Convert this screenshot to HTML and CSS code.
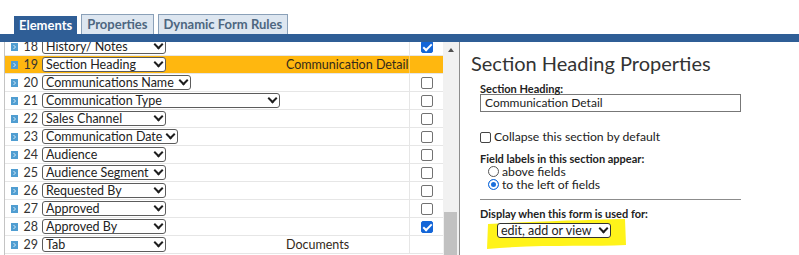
FILE: index.html
```html
<!DOCTYPE html>
<html lang="en">
<head>
    <meta charset="UTF-8">
    <title>Form Elements</title>
    <link rel="stylesheet" href="styles.css">
</head>
<body>
    <div class="tabs">
        <div class="tab active">Elements</div>
        <div class="tab">Properties</div>
        <div class="tab">Dynamic Form Rules</div>
    </div>
    <div class="bar"></div>

    <div class="main">
        <div class="list-pane">
            <div class="rows">
                <div class="rows-inner">
                    <div class="row">
                        <div class="cell-field"><svg class="grip" width="7" height="8" viewBox="0 0 7 8"><rect width="7" height="8" fill="#4f9dd1"/><path d="M2.5 2l2 2-2 2" stroke="#d6ebf7" fill="none"/></svg><span class="num">18</span><span class="sel w-sm"><span class="sel-text">History/ Notes</span></span></div>
                        <div class="cell-label"></div>
                        <div class="cell-check"><span class="cb on"></span></div>
                    </div>
                    <div class="row current">
                        <div class="cell-field"><svg class="grip" width="7" height="8" viewBox="0 0 7 8"><rect width="7" height="8" fill="#4f9dd1"/><path d="M2.5 2l2 2-2 2" stroke="#d6ebf7" fill="none"/></svg><span class="num">19</span><span class="sel w-sm"><span class="sel-text">Section Heading</span></span></div>
                        <div class="cell-label">Communication Detail</div>
                        <div class="cell-check"></div>
                    </div>
                    <div class="row">
                        <div class="cell-field"><svg class="grip" width="7" height="8" viewBox="0 0 7 8"><rect width="7" height="8" fill="#4f9dd1"/><path d="M2.5 2l2 2-2 2" stroke="#d6ebf7" fill="none"/></svg><span class="num">20</span><span class="sel w-name"><span class="sel-text">Communications Name</span></span></div>
                        <div class="cell-label"></div>
                        <div class="cell-check"><span class="cb"></span></div>
                    </div>
                    <div class="row">
                        <div class="cell-field"><svg class="grip" width="7" height="8" viewBox="0 0 7 8"><rect width="7" height="8" fill="#4f9dd1"/><path d="M2.5 2l2 2-2 2" stroke="#d6ebf7" fill="none"/></svg><span class="num">21</span><span class="sel w-type"><span class="sel-text">Communication Type</span></span></div>
                        <div class="cell-label"></div>
                        <div class="cell-check"><span class="cb"></span></div>
                    </div>
                    <div class="row">
                        <div class="cell-field"><svg class="grip" width="7" height="8" viewBox="0 0 7 8"><rect width="7" height="8" fill="#4f9dd1"/><path d="M2.5 2l2 2-2 2" stroke="#d6ebf7" fill="none"/></svg><span class="num">22</span><span class="sel w-sm"><span class="sel-text">Sales Channel</span></span></div>
                        <div class="cell-label"></div>
                        <div class="cell-check"><span class="cb"></span></div>
                    </div>
                    <div class="row">
                        <div class="cell-field"><svg class="grip" width="7" height="8" viewBox="0 0 7 8"><rect width="7" height="8" fill="#4f9dd1"/><path d="M2.5 2l2 2-2 2" stroke="#d6ebf7" fill="none"/></svg><span class="num">23</span><span class="sel w-date"><span class="sel-text">Communication Date</span></span></div>
                        <div class="cell-label"></div>
                        <div class="cell-check"><span class="cb"></span></div>
                    </div>
                    <div class="row">
                        <div class="cell-field"><svg class="grip" width="7" height="8" viewBox="0 0 7 8"><rect width="7" height="8" fill="#4f9dd1"/><path d="M2.5 2l2 2-2 2" stroke="#d6ebf7" fill="none"/></svg><span class="num">24</span><span class="sel w-sm"><span class="sel-text">Audience</span></span></div>
                        <div class="cell-label"></div>
                        <div class="cell-check"><span class="cb"></span></div>
                    </div>
                    <div class="row">
                        <div class="cell-field"><svg class="grip" width="7" height="8" viewBox="0 0 7 8"><rect width="7" height="8" fill="#4f9dd1"/><path d="M2.5 2l2 2-2 2" stroke="#d6ebf7" fill="none"/></svg><span class="num">25</span><span class="sel w-sm"><span class="sel-text">Audience Segment</span></span></div>
                        <div class="cell-label"></div>
                        <div class="cell-check"><span class="cb"></span></div>
                    </div>
                    <div class="row">
                        <div class="cell-field"><svg class="grip" width="7" height="8" viewBox="0 0 7 8"><rect width="7" height="8" fill="#4f9dd1"/><path d="M2.5 2l2 2-2 2" stroke="#d6ebf7" fill="none"/></svg><span class="num">26</span><span class="sel w-sm"><span class="sel-text">Requested By</span></span></div>
                        <div class="cell-label"></div>
                        <div class="cell-check"><span class="cb"></span></div>
                    </div>
                    <div class="row">
                        <div class="cell-field"><svg class="grip" width="7" height="8" viewBox="0 0 7 8"><rect width="7" height="8" fill="#4f9dd1"/><path d="M2.5 2l2 2-2 2" stroke="#d6ebf7" fill="none"/></svg><span class="num">27</span><span class="sel w-sm"><span class="sel-text">Approved</span></span></div>
                        <div class="cell-label"></div>
                        <div class="cell-check"><span class="cb"></span></div>
                    </div>
                    <div class="row">
                        <div class="cell-field"><svg class="grip" width="7" height="8" viewBox="0 0 7 8"><rect width="7" height="8" fill="#4f9dd1"/><path d="M2.5 2l2 2-2 2" stroke="#d6ebf7" fill="none"/></svg><span class="num">28</span><span class="sel w-sm"><span class="sel-text">Approved By</span></span></div>
                        <div class="cell-label"></div>
                        <div class="cell-check"><span class="cb on"></span></div>
                    </div>
                    <div class="row">
                        <div class="cell-field"><svg class="grip" width="7" height="8" viewBox="0 0 7 8"><rect width="7" height="8" fill="#4f9dd1"/><path d="M2.5 2l2 2-2 2" stroke="#d6ebf7" fill="none"/></svg><span class="num">29</span><span class="sel w-sm"><span class="sel-text">Tab</span></span></div>
                        <div class="cell-label">Documents</div>
                        <div class="cell-check"></div>
                    </div>
                </div>
            </div>
            <div class="scroll">
                <div class="scroll-up"><span class="arrow-up"></span></div>
                <div class="scroll-space"></div>
                <div class="scroll-thumb"></div>
            </div>
        </div>

        <div class="props">
            <h1>Section Heading Properties</h1>
            <div class="form">
                <div class="lbl">Section Heading:</div>
                <div class="text-in">Communication Detail</div>

                <div class="check-line"><span class="box"></span>Collapse this section by default</div>

                <div class="lbl lbl-gap">Field labels in this section appear:</div>
                <div class="radio-line"><span class="radio"></span>above fields</div>
                <div class="radio-line"><span class="radio on"></span>to the left of fields</div>

                <div class="rule"></div>

                <div class="lbl lbl-gap">Display when this form is used for:</div>
                <div class="marked">
                    <svg class="marker" width="150" height="34" viewBox="0 0 150 34"><path d="M8 6 C40 4 100 2 145 1 L146 27 C110 29 60 26 7 31 Z" fill="#fff31a"/></svg>
                    <span class="sel sel-mode"><span class="sel-text">edit, add or view</span></span>
                </div>
            </div>
        </div>
    </div>
</body>
</html>
```

FILE: styles.css
```css
* {
    margin: 0;
    padding: 0;
    box-sizing: border-box;
}

body {
    font-family: Lato, 'Open Sans', sans-serif;
    color: #222;
    background: #fff;
    width: 799px;
    height: 255px;
    overflow: hidden;
}

/* tabs */
.tabs {
    display: flex;
    align-items: flex-end;
    gap: 4px;
    height: 34px;
    padding: 14px 0 0 14px;
}

.tab {
    height: 20px;
    padding: 0 5px;
    font-size: 13px;
    font-weight: 700;
    line-height: 19px;
    color: #4d6680;
    background: #dde6f0;
    border: 1px solid #8aa0b8;
    border-bottom: none;
}

.tab.active {
    height: 18px;
    line-height: 17px;
    padding: 0 4px;
    background: #2f5e96;
    border-color: #2f5e96;
    color: #fff;
}

.bar {
    height: 8px;
    background: #2f5e96;
}

.main {
    display: flex;
    height: 213px;
}

/* element list */
.list-pane {
    display: flex;
    margin-left: 4px;
    border-left: 1px solid #c4c4c4;
    border-right: 1px solid #8d8d8d;
}

.rows {
    width: 438px;
    overflow: hidden;
}

.rows-inner {
    margin-top: -4px;
}

.row {
    display: grid;
    grid-template-columns: 279px 125px 34px;
    align-items: center;
    height: 18px;
    border-bottom: 1px solid #e6e6e6;
}

.row.current {
    background: #ffb70f;
}

.cell-field {
    display: flex;
    align-items: center;
}

.grip {
    margin-left: 6px;
    flex-shrink: 0;
}

.num {
    width: 20px;
    text-align: right;
    font-size: 12.5px;
    color: #333;
}

.sel {
    display: flex;
    align-items: center;
    height: 15px;
    margin-left: 4px;
    padding: 0 2px 0 3px;
    border: 1px solid #5c5c5c;
    border-radius: 3px;
    background: #fff;
    font-size: 12.5px;
}

.sel::after {
    content: "";
    flex-shrink: 0;
    width: 5px;
    height: 5px;
    margin: -5px 1px 0 3px;
    border-right: 2px solid #1e1e1e;
    border-bottom: 2px solid #1e1e1e;
    transform: rotate(45deg);
}

.sel-text {
    flex: 1;
    overflow: hidden;
    white-space: nowrap;
    line-height: 15px;
}

.w-sm { width: 124px; }
.w-name { width: 149px; }
.w-type { width: 238px; }
.w-date { width: 136px; }

.cell-label {
    padding-left: 2px;
    font-size: 12.5px;
    white-space: nowrap;
    color: #33291a;
}

.cell-check {
    display: flex;
    align-items: center;
    justify-content: center;
    height: 17px;
    border-left: 1px solid #e6e6e6;
}

.row.current .cell-check {
    border-left-color: #f9cd6c;
}

.cb {
    position: relative;
    width: 12px;
    height: 12px;
    border: 1px solid #727272;
    border-radius: 2px;
    background: #fff;
}

.cb.on {
    background: #1466d8;
    border-color: #1466d8;
}

.cb.on::after {
    content: "";
    position: absolute;
    left: 3px;
    top: 0;
    width: 3px;
    height: 7px;
    border: solid #fff;
    border-width: 0 2px 2px 0;
    transform: rotate(45deg);
}

/* scrollbar */
.scroll {
    display: flex;
    flex-direction: column;
    width: 16px;
    background: #f1f1f1;
}

.scroll-up {
    display: flex;
    align-items: center;
    justify-content: center;
    height: 15px;
}

.arrow-up {
    width: 0;
    height: 0;
    border-left: 3px solid transparent;
    border-right: 3px solid transparent;
    border-bottom: 4px solid #505050;
}

.scroll-space {
    flex: 1;
}

.scroll-thumb {
    height: 43px;
    margin: 0 2px 0 1px;
    background: #c1c1c1;
}

/* properties */
.props {
    flex: 1;
    padding: 9px 0 0 11px;
}

.props h1 {
    font-size: 20px;
    font-weight: 400;
    line-height: 24px;
    color: #333;
}

.form {
    width: 261px;
    margin: 8px 0 0 9px;
}

.lbl {
    height: 12px;
    font-size: 11px;
    font-weight: 700;
    line-height: 12px;
    color: #222;
    white-space: nowrap;
}

.lbl-gap {
    margin-top: 9px;
}

.text-in {
    height: 18px;
    margin-top: -1px;
    padding: 0 4px;
    border: 1px solid #777;
    font-size: 12px;
    line-height: 16px;
}

.check-line {
    display: flex;
    align-items: center;
    gap: 3px;
    height: 14px;
    margin-top: 18px;
    font-size: 12.2px;
    line-height: 14px;
}

.box {
    width: 11px;
    height: 11px;
    border: 1px solid #444;
    border-radius: 2px;
}

.radio-line {
    display: flex;
    align-items: center;
    gap: 3px;
    height: 13px;
    padding-left: 8px;
    font-size: 12.2px;
    line-height: 13px;
}

.radio {
    width: 11px;
    height: 11px;
    border: 1px solid #555;
    border-radius: 50%;
}

.radio.on {
    background: #1a6fdc;
    border-color: #1a6fdc;
    box-shadow: inset 0 0 0 2px #fff;
}

.rule {
    height: 1px;
    margin-top: 8px;
    background: #8c8c8c;
}

.rule + .lbl-gap {
    margin-top: 8px;
}

.marked {
    position: relative;
    margin-top: 3px;
    padding-left: 17px;
}

.marker {
    position: absolute;
    left: 0;
    top: -5px;
}

.sel-mode {
    position: relative;
    width: 114px;
    margin-left: 0;
    border-color: #333;
}
```
